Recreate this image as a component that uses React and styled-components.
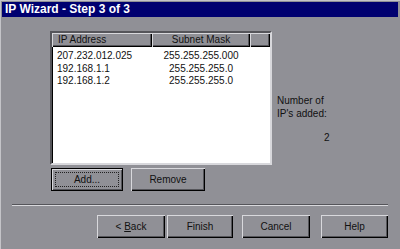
import React from "react";
import styled, { createGlobalStyle } from "styled-components";

const Global = createGlobalStyle`
  html, body { margin: 0; padding: 0; background: #909096; overflow: hidden; }
  * { box-sizing: border-box; }
`;

const GRAY = "#909096";
const LIGHT = "#d8d8dc";
const DARK = "#55555a";
const FONT = `"Liberation Sans", Arial, sans-serif`;

const Window = styled.div`
  width: 400px;
  height: 249px;
  background: ${GRAY};
  border-top: 1px solid #c4c4c8;
  border-left: 1px solid #c4c4c8;
  padding: 1px 2px 1px 1px;
  font-family: ${FONT};
  font-size: 10px;
  color: #111;
  display: flex;
  flex-direction: column;
`;

const TitleBar = styled.div`
  height: 15px;
  background: #000070;
  color: #fff;
  font-weight: bold;
  font-size: 12px;
  line-height: 15px;
  padding-left: 3px;
  white-space: nowrap;
`;

const TopRow = styled.div`
  display: flex;
  padding: 14px 0 0 48px;
`;

const ListBox = styled.div`
  width: 222px;
  height: 134px;
  background: #fff;
  border-style: solid;
  border-width: 2px;
  border-color: ${DARK} ${LIGHT} ${LIGHT} ${DARK};
  box-shadow: inset 1px 1px 0 #000;
  display: flex;
  flex-direction: column;
`;

const Header = styled.div`
  display: flex;
  height: 14px;
  flex: none;
`;

const HeaderCell = styled.div`
  width: ${(p) => (p.$w ? `${p.$w}px` : "auto")};
  flex: ${(p) => (p.$w ? "none" : "1")};
  background: ${GRAY};
  box-shadow: inset 1px 1px 0 ${LIGHT}, inset -1px -1px 0 #000, inset -2px -2px 0 ${DARK};
  line-height: 14px;
  text-align: ${(p) => p.$align || "left"};
  padding-left: ${(p) => (p.$align === "center" ? 0 : 6)}px;
  white-space: nowrap;
`;

const Rows = styled.div`
  padding-top: 3px;
`;

const Row = styled.div`
  display: flex;
  height: 12.5px;
  line-height: 12.5px;
`;

const Cell = styled.div`
  width: ${(p) => p.$w}px;
  text-align: ${(p) => p.$align || "left"};
  padding-left: ${(p) => (p.$align === "center" ? 0 : 5)}px;
  white-space: nowrap;
`;

const Side = styled.div`
  margin-left: 5px;
  padding-top: 63px;
  line-height: 13px;
`;

const Count = styled.div`
  margin: 11px 0 0 47px;
`;

const ButtonRow = styled.div`
  display: flex;
  gap: 8px;
  padding: 3px 0 0 49px;
`;

const Button = styled.button`
  position: relative;
  width: ${(p) => p.$w}px;
  height: 23px;
  margin-left: ${(p) => p.$ml || 0}px;
  padding: 0;
  border: none;
  background: ${GRAY};
  box-shadow: inset 1px 1px 0 ${LIGHT}, inset -1px -1px 0 #000, inset -2px -2px 0 ${DARK};
  font-family: ${FONT};
  font-size: 10px;
  color: #111;
  ${(p) =>
    p.$focus &&
    `
    box-shadow: inset 1px 1px 0 #000, inset -1px -1px 0 #000, inset 2px 2px 0 ${LIGHT}, inset -2px -2px 0 ${DARK};
    &::after {
      content: "";
      position: absolute;
      inset: 4px;
      border: 1px dotted #222;
    }
  `}
`;

const Separator = styled.div`
  margin: 13px 10px 0 10px;
  height: 2px;
  border-top: 1px solid ${DARK};
  border-bottom: 1px solid ${LIGHT};
`;

const NavRow = styled.div`
  display: flex;
  justify-content: flex-end;
  padding: 9px 10px 0 0;
`;

const rows = [
  ["207.232.012.025", "255.255.255.000"],
  ["192.168.1.1", "255.255.255.0"],
  ["192.168.1.2", "255.255.255.0"],
];

export default function App() {
  return (
    <>
      <Global />
      <Window>
        <TitleBar>IP Wizard - Step 3 of 3</TitleBar>
        <TopRow>
          <ListBox>
            <Header>
              <HeaderCell $w={100}>IP Address</HeaderCell>
              <HeaderCell $w={98} $align="center">Subnet Mask</HeaderCell>
              <HeaderCell />
            </Header>
            <Rows>
              {rows.map(([ip, mask]) => (
                <Row key={ip}>
                  <Cell $w={100}>{ip}</Cell>
                  <Cell $w={98} $align="center">{mask}</Cell>
                </Row>
              ))}
            </Rows>
          </ListBox>
          <Side>
            <div>Number of</div>
            <div>IP's added:</div>
            <Count>2</Count>
          </Side>
        </TopRow>
        <ButtonRow>
          <Button $w={72} $focus>Add...</Button>
          <Button $w={74}>Remove</Button>
        </ButtonRow>
        <Separator />
        <NavRow>
          <Button $w={68}>&lt; <u>B</u>ack</Button>
          <Button $w={66} $ml={2}>Finish</Button>
          <Button $w={68} $ml={9}>Cancel</Button>
          <Button $w={67} $ml={11}>Help</Button>
        </NavRow>
      </Window>
    </>
  );
}
